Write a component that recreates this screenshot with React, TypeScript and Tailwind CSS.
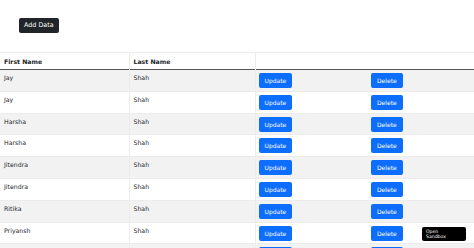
const people = [
  { first: "Jay", last: "Shah" },
  { first: "Jay", last: "Shah" },
  { first: "Harsha", last: "Shah" },
  { first: "Harsha", last: "Shah" },
  { first: "Jitendra", last: "Shah" },
  { first: "Jitendra", last: "Shah" },
  { first: "Ritika", last: "Shah" },
  { first: "Priyansh", last: "Shah" },
  { first: "Jay", last: "Shah" },
]

const App = () => {
  return (
    <div className="relative w-[474px] h-[248px] overflow-hidden bg-white text-[#212529] font-['DejaVu_Sans',sans-serif]">
      <div className="flex pt-[18px] pl-[19px]">
        <button className="bg-[#212529] text-white text-[6.4px] leading-[9px] px-[5px] py-[3px] rounded-[2px]">Add Data</button>
      </div>

      <table className="mt-[19px] w-full border-collapse text-[6.2px] leading-[9px] table-fixed">
        <colgroup>
          <col className="w-[129px]" />
          <col className="w-[126px]" />
          <col className="w-[112px]" />
          <col className="w-[107px]" />
        </colgroup>
        <thead>
          <tr className="border-t border-[#ececec] h-[17px] border-b-[1.5px] border-b-[#555]">
            <th className="text-left font-bold px-[4px] border-r border-[#ececec]">First Name</th>
            <th className="text-left font-bold px-[4px] border-r border-[#ececec]">Last Name</th>
            <th colSpan={2} className="border-r border-[#ececec]"></th>
          </tr>
        </thead>
        <tbody>
          {people.map((p, i) => (
            <tr key={i} className={`h-[21.8px] border-b border-[#ececec] ${i % 2 === 0 ? "bg-[#f2f2f2]" : "bg-white"}`}>
              <td className="align-top px-[4px] pt-[3px] border-r border-[#ececec]">{p.first}</td>
              <td className="align-top px-[4px] pt-[3px] border-r border-[#ececec]">{p.last}</td>
              <td className="align-top px-[3px] pt-[3px]">
                <button className="bg-[#0d6efd] text-white text-[6px] leading-[9px] px-[6px] py-[3px] rounded-[2px]">Update</button>
              </td>
              <td className="align-top px-[4px] pt-[3px]">
                <button className="bg-[#0d6efd] text-white text-[6px] leading-[9px] px-[6px] py-[3px] rounded-[2px]">Delete</button>
              </td>
            </tr>
          ))}
        </tbody>
      </table>

      <div className="absolute left-[422px] top-[227px] w-[44px] h-[14px] bg-black rounded-[2px] text-white text-[4.6px] leading-[5px] pl-[4px] pt-[2px]">
        Open<br />Sandbox
      </div>
    </div>
  )
}

export default App
